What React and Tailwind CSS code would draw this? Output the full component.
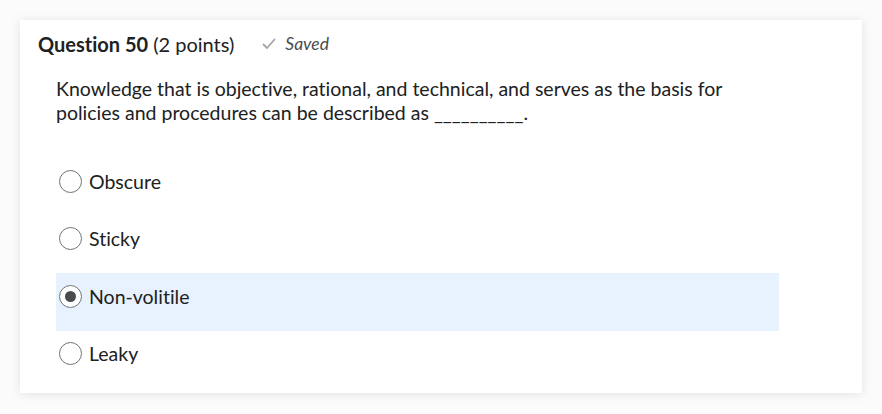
export default function App() {
  const options = ["Obscure", "Sticky", "Non-volitile", "Leaky"];
  const selected = 2;
  return (
    <div className="w-[882px] h-[414px] bg-[#fbfbfb] p-[20px] [font-variant-ligatures:none]" style={{ fontFamily: "Lato, 'Noto Sans', sans-serif" }}>
      <div className="w-[842px] h-[373px] bg-white shadow-[0_1px_10px_rgba(0,0,0,0.10)] pl-[18px] pt-[12px] text-[#202122]">
        <div className="flex items-center h-[24px]">
          <span className="text-[20px] font-bold">Question 50</span>
          <span className="text-[20px] ml-[5px]">(2 points)</span>
          <svg className="ml-[28px]" width="14" height="12" viewBox="0 0 14 12">
            <path d="M1.5 6.5 L5 10 L12.5 1.5" fill="none" stroke="#a3a6a8" strokeWidth="1.8" strokeLinecap="round" strokeLinejoin="round" />
          </svg>
          <span className="text-[17.5px] italic text-[#494c4e] ml-[9px]">Saved</span>
        </div>
        <div className="ml-[18px] mt-[21px] text-[19.5px] leading-[24px] w-[700px]">
          Knowledge that is objective, rational, and technical, and serves as the basis for policies and procedures can be described as __________.
        </div>
        <div className="ml-[18px] mt-[33px] w-[723px] flex flex-col">
          {options.map((o, i) => (
            <div key={o} className={`h-[57.5px] pb-[11px] flex items-center pl-[3px] ${i === selected ? "bg-[#e8f2fe]" : ""}`}>
              <div className="w-[23px] h-[23px] rounded-full border border-[#6e7376] bg-white flex items-center justify-center shrink-0">
                {i === selected && <div className="w-[11px] h-[11px] rounded-full bg-[#494c4e]" />}
              </div>
              <span className="ml-[7px] text-[19.5px]">{o}</span>
            </div>
          ))}
        </div>
      </div>
    </div>
  );
}
